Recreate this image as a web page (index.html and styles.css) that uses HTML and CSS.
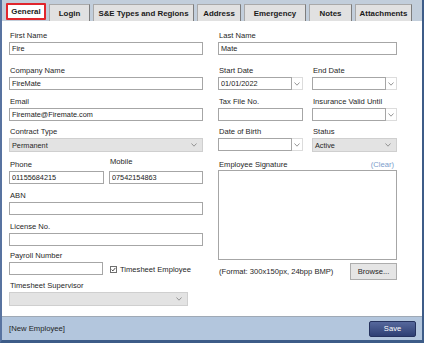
FILE: index.html
```html
<!DOCTYPE html>
<html>
<head>
<meta charset="utf-8">
<link rel="stylesheet" href="styles.css">
</head>
<body>
<div class="window">
  <nav class="tabs">
    <div class="tab tab-active w-general">General</div>
    <div class="tab w-login">Login</div>
    <div class="tab w-se">S&amp;E Types and Regions</div>
    <div class="tab w-address">Address</div>
    <div class="tab w-emergency">Emergency</div>
    <div class="tab w-notes">Notes</div>
    <div class="tab w-attach">Attachments</div>
  </nav>
  <main class="panel">
    <div class="form">
      <div class="field">
        <label class="lbl">First Name</label>
        <input class="inp" value="Fire">
      </div>
      <div class="field">
        <label class="lbl">Last Name</label>
        <input class="inp" value="Mate">
      </div>

      <div class="field">
        <label class="lbl">Company Name</label>
        <input class="inp" value="FireMate">
      </div>
      <div class="pair">
        <div class="field">
          <label class="lbl">Start Date</label>
          <div class="combo"><input class="inp combo-inp" value="01/01/2022"><span class="arrow"><svg width="6" height="4" viewBox="0 0 6 4"><path d="M0.5 0.5 L3 3.2 L5.5 0.5" fill="none" stroke="#8a8a8a" stroke-width="0.9"/></svg></span></div>
        </div>
        <div class="field">
          <label class="lbl">End Date</label>
          <div class="combo"><input class="inp combo-inp" value=""><span class="arrow"><svg width="6" height="4" viewBox="0 0 6 4"><path d="M0.5 0.5 L3 3.2 L5.5 0.5" fill="none" stroke="#8a8a8a" stroke-width="0.9"/></svg></span></div>
        </div>
      </div>

      <div class="field">
        <label class="lbl">Email</label>
        <input class="inp" value="Firemate@Firemate.com">
      </div>
      <div class="pair">
        <div class="field">
          <label class="lbl">Tax File No.</label>
          <input class="inp" value="">
        </div>
        <div class="field">
          <label class="lbl">Insurance Valid Until</label>
          <div class="combo"><input class="inp combo-inp" value=""><span class="arrow"><svg width="6" height="4" viewBox="0 0 6 4"><path d="M0.5 0.5 L3 3.2 L5.5 0.5" fill="none" stroke="#8a8a8a" stroke-width="0.9"/></svg></span></div>
        </div>
      </div>

      <div class="field">
        <label class="lbl">Contract Type</label>
        <div class="select"><span>Permanent</span><svg width="6" height="4" viewBox="0 0 6 4"><path d="M0.5 0.5 L3 3.2 L5.5 0.5" fill="none" stroke="#8a8a8a" stroke-width="0.9"/></svg></div>
      </div>
      <div class="pair">
        <div class="field">
          <label class="lbl">Date of Birth</label>
          <div class="combo"><input class="inp combo-inp" value=""><span class="arrow"><svg width="6" height="4" viewBox="0 0 6 4"><path d="M0.5 0.5 L3 3.2 L5.5 0.5" fill="none" stroke="#8a8a8a" stroke-width="0.9"/></svg></span></div>
        </div>
        <div class="field">
          <label class="lbl">Status</label>
          <div class="select"><span>Active</span><svg width="6" height="4" viewBox="0 0 6 4"><path d="M0.5 0.5 L3 3.2 L5.5 0.5" fill="none" stroke="#8a8a8a" stroke-width="0.9"/></svg></div>
        </div>
      </div>

      <div class="sig">
        <div class="sig-head">
          <label class="lbl sig-lbl">Employee Signature</label>
          <span class="clear">(Clear)</span>
        </div>
        <div class="sig-box"></div>
        <div class="sig-foot">
          <span class="format">(Format: 300x150px, 24bpp BMP)</span>
          <button class="btn-browse">Browse...</button>
        </div>
      </div>

      <div class="split">
        <div class="field">
          <label class="lbl">Phone</label>
          <input class="inp" value="01155684215">
        </div>
        <div class="field">
          <label class="lbl lbl-up">Mobile</label>
          <input class="inp" value="07542154863">
        </div>
      </div>

      <div class="field">
        <label class="lbl">ABN</label>
        <input class="inp" value="">
      </div>

      <div class="field">
        <label class="lbl">License No.</label>
        <input class="inp" value="">
      </div>

      <div class="field">
        <label class="lbl">Payroll Number</label>
        <div class="payroll-row">
          <input class="inp payroll-inp" value="">
          <span class="check"><svg width="7" height="7" viewBox="0 0 7 7"><rect x="0.5" y="0.5" width="6" height="6" fill="#fff" stroke="#6f6f6f"/><path d="M1.6 3.6 L2.9 4.9 L5.4 1.9" fill="none" stroke="#333" stroke-width="0.9"/></svg>Timesheet Employee</span>
        </div>
      </div>

      <div class="field">
        <label class="lbl">Timesheet Supervisor</label>
        <div class="select select-sup"><span></span><svg width="6" height="4" viewBox="0 0 6 4"><path d="M0.5 0.5 L3 3.2 L5.5 0.5" fill="none" stroke="#8a8a8a" stroke-width="0.9"/></svg></div>
      </div>
    </div>
  </main>
  <footer class="footer">
    <span>[New Employee]</span>
    <button class="btn-save">Save</button>
  </footer>
</div>
</body>
</html>
```

FILE: styles.css
```css
body {
  margin: 0;
  font-family: "Liberation Sans", Arial, sans-serif;
  color: #222;
  background: #c2cedb;
}

.window {
  width: 424px;
  height: 343px;
  box-sizing: border-box;
  border-left: 2px solid #5873a0;
  border-right: 2px solid #3d5c88;
  border-bottom: 3px solid #3d5c88;
  display: flex;
  flex-direction: column;
  background: #c2cedb;
}

/* Tabs */
.tabs {
  display: flex;
  gap: 3px;
  padding: 3px 0 0 4px;
  height: 18px;
  flex: none;
}

.tab {
  box-sizing: border-box;
  height: 17px;
  margin-top: 1px;
  border: 1px solid #a9a9a9;
  border-right-color: #7d7d7d;
  border-bottom: none;
  background: #e1e1e1;
  font-size: 7.9px;
  font-weight: bold;
  color: #1a1a1a;
  display: flex;
  align-items: center;
  justify-content: center;
  white-space: nowrap;
}

.tab-active {
  margin-top: 0;
  border: 2px solid #e0262d;
  background: #fff;
  border-radius: 1px;
}

.w-general { width: 40px; }
.w-login { width: 41px; }
.w-se { width: 101px; }
.w-address { width: 44px; }
.w-emergency { width: 62px; }
.w-notes { width: 43px; }
.w-attach { width: 57px; }

/* Panel */
.panel {
  flex: 1;
  background: #fff;
  border-bottom: 1px solid #9fa9b5;
  padding: 10px 0 0 7px;
  box-sizing: border-box;
}

.form {
  display: grid;
  grid-template-columns: 194px 179px;
  column-gap: 15px;
  grid-template-rows: 35px 31px 30px 33px 31px 31px 29px 30px 25px;
}

.field {
  display: flex;
  flex-direction: column;
}

.lbl {
  display: block;
  font-size: 7.6px;
  line-height: 10px;
  height: 10px;
  margin-bottom: 1px;
  padding-left: 1px;
  color: #262626;
  white-space: nowrap;
}

.lbl-up {
  margin-top: -3px;
  margin-bottom: 4px;
}

.inp {
  display: block;
  box-sizing: border-box;
  width: 100%;
  height: 13px;
  margin: 0;
  border: 1px solid #a6a6a6;
  padding: 0 2px;
  font-family: "Liberation Sans", Arial, sans-serif;
  font-size: 7.3px;
  color: #1a1a1a;
  background: #fff;
  outline: none;
}

.pair {
  display: grid;
  grid-template-columns: 85px 85px;
  column-gap: 9px;
}

.split {
  display: grid;
  grid-template-columns: 95px 94px;
  column-gap: 5px;
}

.combo {
  display: flex;
  width: 85px;
  height: 13px;
}

.combo-inp {
  flex: 0 0 74px;
  width: 74px;
}

.arrow {
  flex: 1;
  box-sizing: border-box;
  height: 13px;
  border: 1px solid #dcdcdc;
  border-left: none;
  display: flex;
  align-items: center;
  justify-content: center;
}

.select {
  box-sizing: border-box;
  height: 14px;
  background: #e3e3e3;
  border: 1px solid #cfcfcf;
  display: flex;
  align-items: center;
  justify-content: space-between;
  padding: 0 5px 0 2px;
  font-size: 7.3px;
  color: #262626;
}

.select-sup {
  width: 179px;
}

.payroll-row {
  display: flex;
  align-items: center;
  gap: 7px;
}

.payroll-inp {
  flex: 0 0 94px;
  width: 94px;
}

.check {
  display: flex;
  align-items: center;
  gap: 3px;
  font-size: 7.6px;
  color: #262626;
  margin-top: 1px;
}

/* Signature */
.sig {
  grid-column: 2;
  grid-row: 5 / span 5;
  display: flex;
  flex-direction: column;
}

.sig-head {
  display: flex;
  justify-content: space-between;
  padding-right: 3px;
}

.sig-lbl {
  margin-bottom: 0;
}

.clear {
  font-size: 7.6px;
  line-height: 10px;
  color: #7a9ccb;
}

.sig-box {
  box-sizing: border-box;
  height: 90px;
  border: 1px solid #a6a6a6;
  background: #fff;
}

.sig-foot {
  display: flex;
  justify-content: space-between;
  align-items: center;
  margin-top: 3px;
}

.format {
  font-size: 7.6px;
  padding-left: 1px;
  color: #262626;
}

.btn-browse {
  box-sizing: border-box;
  width: 47px;
  height: 17px;
  margin: 0;
  padding: 0;
  border: 1px solid #adadad;
  background: #e5e5e5;
  font-family: "Liberation Sans", Arial, sans-serif;
  font-size: 7.6px;
  color: #262626;
}

/* Footer */
.footer {
  height: 23px;
  flex: none;
  box-sizing: border-box;
  background: #b3c6dd;
  display: flex;
  align-items: center;
  justify-content: space-between;
  padding: 0 6px 0 7px;
  font-size: 7.7px;
  color: #1e1e1e;
}

.btn-save {
  box-sizing: border-box;
  width: 47px;
  height: 16px;
  margin: 0;
  padding: 0;
  border: 1px solid #25325e;
  border-radius: 2px;
  background: linear-gradient(#56689c, #2e3f73);
  color: #fff;
  font-family: "Liberation Sans", Arial, sans-serif;
  font-size: 7.6px;
}
```
